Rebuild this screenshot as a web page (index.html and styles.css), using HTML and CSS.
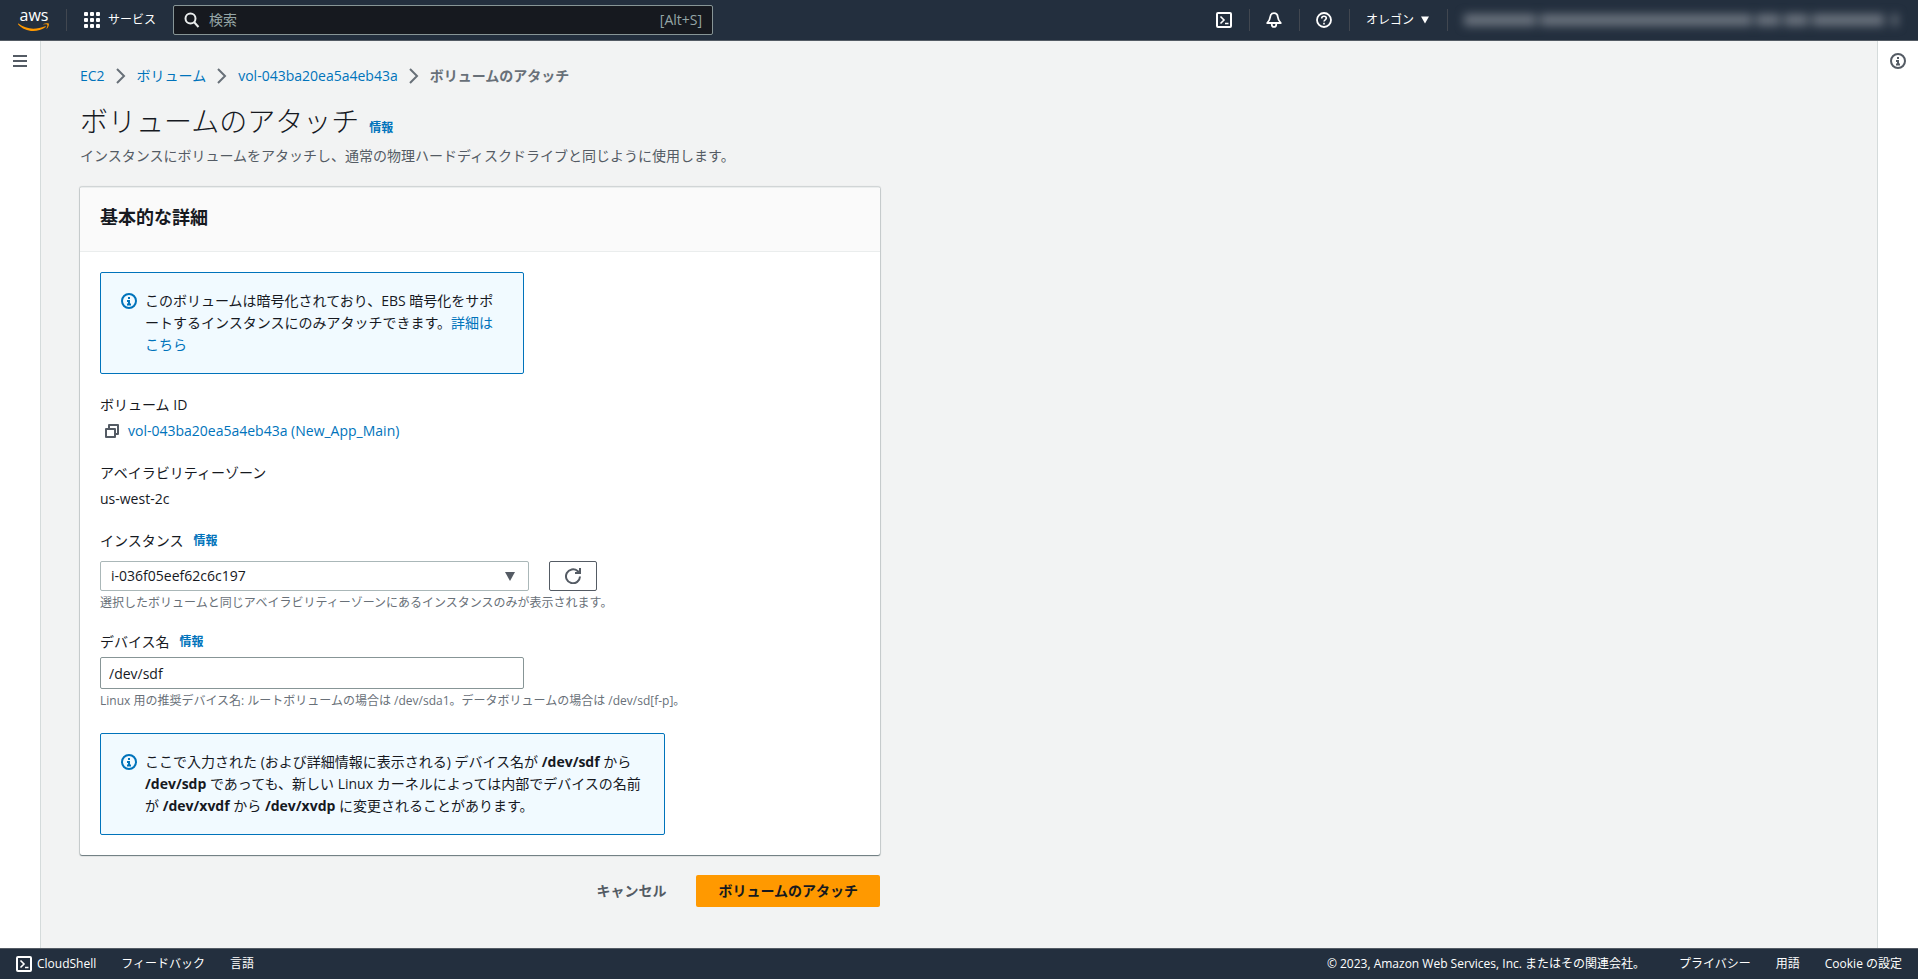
FILE: index.html
```
<!DOCTYPE html>
<html lang="ja">

<head>
	<meta charset="UTF-8">
	<meta name="viewport" content="width=device-width, initial-scale=1.0">
	<title>ボリュームのアタッチ | EC2</title>
	<link rel="stylesheet" href="styles.css">
</head>

<body>
	<header class="topbar">
		<a href="#" class="logo" aria-label="aws">
			<span class="logo-text">aws</span>
			<svg class="logo-smile" width="32" height="10" viewBox="0 0 32 10" fill="#ff9900">
				<path d="M.4 1.6C4.8 5 10 6.7 15.300 6.700c4 0 8-.9 11.800-2.500.7-.3 1.200.4.6.9C24.200 7.600 19.400 9 15.200 9 9.300 9 4.100 6.700.200 2.500c-.4-.5-.2-1.100.2-.9z"/>
				<path d="M29.300 2.800c-.6-.7-2.800-.4-3.800-.2-.3 0-.4-.3-.1-.5 1.900-1.300 5-.9 5.400-.5.400.5-.1 3.600-1.900 5.100-.3.200-.5.100-.4-.2.400-1 1.300-3.100.8-3.700z"/>
			</svg>
		</a>
		<span class="divider"></span>
		<button type="button" class="services">
			<svg width="18" height="18" viewBox="0 0 18 18" fill="#fff">
				<rect x="1" y="1" width="4" height="4" rx="1"/><rect x="7" y="1" width="4" height="4" rx="1"/><rect x="13" y="1" width="4" height="4" rx="1"/>
				<rect x="1" y="7" width="4" height="4" rx="1"/><rect x="7" y="7" width="4" height="4" rx="1"/><rect x="13" y="7" width="4" height="4" rx="1"/>
				<rect x="1" y="13" width="4" height="4" rx="1"/><rect x="7" y="13" width="4" height="4" rx="1"/><rect x="13" y="13" width="4" height="4" rx="1"/>
			</svg>
			サービス
		</button>
		<form class="search">
			<svg width="16" height="16" viewBox="0 0 16 16" fill="none" stroke="#eaeded" stroke-width="2">
				<circle cx="6.500" cy="6.500" r="5"/>
				<path d="M10 10l4.500 5"/>
			</svg>
			<input type="text" aria-label="検索" placeholder="検索">
			<span class="shortcut">[Alt+S]</span>
		</form>
		<div class="topbar-right">
			<button type="button" class="icon-btn" aria-label="CloudShell">
				<svg width="16" height="16" viewBox="0 0 16 16" fill="none" stroke="#fff" stroke-width="2">
					<rect x="1" y="1" width="14" height="14" rx="1"/>
					<path d="M4.500 4.500L8 8l-3.500 3.500M9 11.500h3.500" stroke-width="1.600"/>
				</svg>
			</button>
			<span class="divider"></span>
			<button type="button" class="icon-btn" aria-label="通知">
				<svg width="16" height="16" viewBox="0 0 16 16" fill="none" stroke="#fff" stroke-width="1.800" stroke-linejoin="round">
					<path d="M8 1.200C5.800 1.200 4.400 2.800 4.200 5 4 7.500 3.300 8.700 1.200 11h13.600c-2.100-2.300-2.800-3.500-3-6C11.600 2.800 10.200 1.200 8 1.200z"/>
					<path d="M5.800 11.500v1.200a2.200 2.200 0 0 0 4.400 0v-1.200"/>
				</svg>
			</button>
			<span class="divider"></span>
			<button type="button" class="icon-btn" aria-label="ヘルプ">
				<svg width="16" height="16" viewBox="0 0 16 16" fill="none" stroke="#fff" stroke-width="1.800">
					<circle cx="8" cy="8" r="7"/>
					<path d="M5.700 6.500C5.700 5 6.700 4.300 8 4.300s2.300.8 2.300 2c0 1.500-2.300 1.500-2.300 3.200M8 10.700v1.800" stroke-width="1.600"/>
				</svg>
			</button>
			<span class="divider"></span>
			<button type="button" class="region">
				オレゴン
				<svg width="8" height="8" viewBox="0 0 8 8" fill="#fff"><path d="M0 .5h8L4 7.500z"/></svg>
			</button>
			<span class="divider"></span>
			<div class="account">
				<span class="account-part part-l"></span>
				<span class="account-part part-xl"></span>
				<span class="account-part part-m"></span>
				<span class="account-part part-m"></span>
				<span class="account-part part-l"></span>
				<span class="account-part part-s"></span>
			</div>
		</div>
	</header>

	<div class="layout">
		<nav class="rail rail-left">
			<button type="button" class="icon-btn" aria-label="メニュー">
				<svg width="16" height="16" viewBox="0 0 16 16" stroke="#545b64" stroke-width="2">
					<path d="M1 3h14M1 8h14M1 13h14"/>
				</svg>
			</button>
		</nav>

		<main class="content">
			<nav class="breadcrumb">
				<a href="#">EC2</a>
				<svg width="10" height="16" viewBox="0 0 10 16" fill="none" stroke="#687078" stroke-width="2"><path d="M1 1l7 7-7 7"/></svg>
				<a href="#">ボリューム</a>
				<svg width="10" height="16" viewBox="0 0 10 16" fill="none" stroke="#687078" stroke-width="2"><path d="M1 1l7 7-7 7"/></svg>
				<a href="#">vol-043ba20ea5a4eb43a</a>
				<svg width="10" height="16" viewBox="0 0 10 16" fill="none" stroke="#687078" stroke-width="2"><path d="M1 1l7 7-7 7"/></svg>
				<span class="current">ボリュームのアタッチ</span>
			</nav>

			<div class="page-title">
				<h1>ボリュームのアタッチ</h1>
				<a href="#" class="info">情報</a>
			</div>
			<p class="description">インスタンスにボリュームをアタッチし、通常の物理ハードディスクドライブと同じように使用します。</p>

			<form class="attach-form">
				<section class="card">
					<div class="card-header">
						<h2>基本的な詳細</h2>
					</div>
					<div class="card-body">
						<div class="alert">
							<svg width="16" height="16" viewBox="0 0 16 16" fill="none" stroke="#0073bb" stroke-width="2">
								<circle cx="8" cy="8" r="7"/>
								<path d="M8 4v2M6 8h2v3M6 11.500h4"/>
							</svg>
							<p>このボリュームは暗号化されており、EBS 暗号化をサポートするインスタンスにのみアタッチできます。<a href="#">詳細はこちら</a></p>
						</div>

						<div class="field">
							<div class="label">ボリューム ID</div>
							<div class="value copy-row">
								<button type="button" class="copy-btn" aria-label="コピー">
									<svg width="16" height="16" viewBox="0 0 16 16" fill="none" stroke="#545b64" stroke-width="2" stroke-linejoin="round">
										<rect x="2" y="6" width="9" height="8"/>
										<path d="M5 6V2h9v9h-3"/>
									</svg>
								</button>
								<a href="#">vol-043ba20ea5a4eb43a (New_App_Main)</a>
							</div>
						</div>

						<div class="field">
							<div class="label">アベイラビリティーゾーン</div>
							<div class="value">us-west-2c</div>
						</div>

						<div class="field">
							<div class="label">
								<label for="instance">インスタンス</label>
								<a href="#" class="info">情報</a>
							</div>
							<div class="select-row">
								<div class="select-wrap">
									<select id="instance">
										<option>i-036f05eef62c6c197</option>
									</select>
									<svg class="caret" width="10" height="9" viewBox="0 0 10 9" fill="#545b64"><path d="M0 0h10L5 9z"/></svg>
								</div>
								<button type="button" class="refresh-btn" aria-label="更新">
									<svg width="16" height="16" viewBox="0 0 16 16" fill="none" stroke="#545b64" stroke-width="2">
										<path d="M15 8.500A7 7 0 1 1 12.600 3L14 4.500"/>
										<path d="M15 0v5H10"/>
									</svg>
								</button>
							</div>
							<div class="hint">選択したボリュームと同じアベイラビリティーゾーンにあるインスタンスのみが表示されます。</div>
						</div>

						<div class="field">
							<div class="label">
								<label for="device">デバイス名</label>
								<a href="#" class="info">情報</a>
							</div>
							<input type="text" id="device" class="text-input" value="/dev/sdf">
							<div class="hint">Linux 用の推奨デバイス名: ルートボリュームの場合は /dev/sda1。データボリュームの場合は /dev/sd[f-p]。</div>
						</div>

						<div class="alert alert-wide">
							<svg width="16" height="16" viewBox="0 0 16 16" fill="none" stroke="#0073bb" stroke-width="2">
								<circle cx="8" cy="8" r="7"/>
								<path d="M8 4v2M6 8h2v3M6 11.500h4"/>
							</svg>
							<p>ここで入力された (および詳細情報に表示される) デバイス名が <b>/dev/sdf</b> から <b>/dev/sdp</b> であっても、新しい Linux カーネルによっては内部でデバイスの名前が <b>/dev/xvdf</b> から <b>/dev/xvdp</b> に変更されることがあります。</p>
						</div>
					</div>
				</section>

				<div class="actions">
					<button type="button" class="btn btn-link">キャンセル</button>
					<button type="submit" class="btn btn-primary">ボリュームのアタッチ</button>
				</div>
			</form>
		</main>

		<aside class="rail rail-right">
			<button type="button" class="icon-btn" aria-label="情報パネル">
				<svg width="16" height="16" viewBox="0 0 16 16" fill="none" stroke="#545b64" stroke-width="2">
					<circle cx="8" cy="8" r="7"/>
					<path d="M8 4v2M6 8h2v3M6 11.500h4"/>
				</svg>
			</button>
		</aside>
	</div>

	<footer class="footer">
		<button type="button" class="cloudshell">
			<svg width="16" height="16" viewBox="0 0 16 16" fill="none" stroke="#fff" stroke-width="2">
				<rect x="1" y="1" width="14" height="14" rx="1"/>
				<path d="M4.500 4.500L8 8l-3.500 3.500M9 11.500h3.500" stroke-width="1.600"/>
			</svg>
			CloudShell
		</button>
		<a href="#">フィードバック</a>
		<a href="#">言語</a>
		<span class="copyright">© 2023, Amazon Web Services, Inc. またはその関連会社。</span>
		<a href="#">プライバシー</a>
		<a href="#">用語</a>
		<a href="#">Cookie の設定</a>
	</footer>
</body>

</html>
```
FILE: styles.css
```
* {
	box-sizing: border-box;
}

body {
	margin: 0;
	min-height: 100vh;
	display: flex;
	flex-direction: column;
	font-family: "Open Sans", "Noto Sans CJK JP", sans-serif;
	font-size: 14px;
	line-height: 22px;
	color: #16191f;
	background: #f2f3f3;
}

h1, h2, p {
	margin: 0;
}

a {
	color: #0073bb;
	text-decoration: none;
}

button, input, select {
	font-family: inherit;
	font-size: inherit;
	line-height: inherit;
	color: inherit;
}

button {
	padding: 0;
	border: none;
	background: none;
	cursor: pointer;
}

svg {
	display: block;
	flex-shrink: 0;
}

/* top bar */
.topbar {
	display: flex;
	align-items: center;
	height: 41px;
	padding-left: 18px;
	background: #232f3e;
	border-bottom: 1px solid #545b64;
	color: #fff;
	font-size: 12px;
}

.logo {
	display: flex;
	flex-direction: column;
	align-items: center;
	width: 32px;
	margin-right: 16px;
	color: #fff;
}

.logo-text {
	font-size: 16px;
	font-weight: 500;
	line-height: 12px;
}

.logo-smile {
	margin-top: 1px;
}

.divider {
	width: 1px;
	height: 22px;
	background: #414750;
}

.services {
	display: flex;
	align-items: center;
	gap: 7px;
	margin: 0 17px 0 16px;
}

.search {
	display: flex;
	align-items: center;
	gap: 9px;
	width: 540px;
	height: 30px;
	padding: 0 10px;
	background: #16191f;
	border: 1px solid #879596;
	border-radius: 2px;
	font-size: 14px;
}

.search input {
	flex: 1;
	min-width: 0;
	padding: 0;
	border: none;
	outline: none;
	background: none;
	color: #fff;
}

.search input::placeholder,
.shortcut {
	color: #95a5a6;
}

.topbar-right {
	display: flex;
	align-items: center;
	gap: 16px;
	margin-left: auto;
	padding-right: 20px;
}

.icon-btn {
	width: 17px;
}

.region {
	display: flex;
	align-items: center;
	gap: 7px;
	padding-right: 2px;
}

.account {
	display: flex;
	align-items: center;
	gap: 4px;
	width: 434px;
	height: 18px;
	filter: blur(5px);
}

.account-part {
	height: 12px;
	background: #6a727d;
}

.part-s {
	width: 6px;
	margin-left: auto;
}

.part-m {
	width: 24px;
}

.part-l {
	width: 72px;
}

.part-xl {
	width: 212px;
}

/* page */
.layout {
	flex: 1;
	display: flex;
}

.rail {
	display: flex;
	justify-content: center;
	align-items: flex-start;
	width: 41px;
	padding-top: 12px;
	background: #fff;
}

.rail-left {
	border-right: 1px solid #d5dbdb;
}

.rail-right {
	border-left: 1px solid #d5dbdb;
}

.content {
	flex: 1;
	padding: 24px 40px 32px 39px;
}

.breadcrumb {
	display: flex;
	align-items: center;
	gap: 11px;
}

.current {
	color: #687078;
	font-weight: 700;
}

.page-title {
	display: flex;
	align-items: baseline;
	gap: 10px;
	margin-top: 14px;
}

.page-title h1 {
	font-size: 28px;
	font-weight: 300;
	line-height: 40px;
}

.info {
	font-size: 12px;
	font-weight: 700;
}

.description {
	margin-top: 4px;
	color: #545b64;
}

.attach-form {
	max-width: 800px;
	margin-top: 20px;
}

.card {
	background: #fff;
	border-top: 1px solid #eaeded;
	border-radius: 2px;
	box-shadow: 0 1px 1px 0 rgba(0, 28, 36, 0.5), 0 0 1px 1px rgba(0, 28, 36, 0.15);
}

.card-header {
	padding: 18px 20px 23px;
	background: #fafafa;
	border-bottom: 1px solid #eaeded;
}

.card-header h2 {
	font-size: 18px;
	font-weight: 700;
	line-height: 22px;
}

.card-body {
	display: flex;
	flex-direction: column;
	gap: 20px;
	padding: 20px;
}

.alert {
	display: flex;
	gap: 8px;
	max-width: 424px;
	padding: 17px 20px;
	background: #f1faff;
	border: 1px solid #0073bb;
	border-radius: 2px;
}

.alert svg {
	margin-top: 3px;
}

.alert-wide {
	max-width: 565px;
	margin-top: 4px;
}

.label {
	display: flex;
	align-items: center;
	gap: 10px;
}

.field .value {
	margin-top: 4px;
}

.copy-row {
	display: flex;
	align-items: center;
	gap: 8px;
	padding-left: 4px;
}

.select-row {
	display: flex;
	gap: 20px;
	margin-top: 9px;
}

.select-wrap {
	position: relative;
	width: 429px;
}

.select-wrap select {
	appearance: none;
	display: block;
	width: 100%;
	height: 30px;
	padding: 0 30px 0 10px;
	border: 1px solid #aab7b8;
	border-radius: 2px;
	background: #fff;
}

.caret {
	position: absolute;
	top: 11px;
	right: 14px;
	pointer-events: none;
}

.refresh-btn {
	display: flex;
	justify-content: center;
	align-items: center;
	width: 48px;
	height: 30px;
	border: 1px solid #545b64;
	border-radius: 2px;
}

.text-input {
	display: block;
	width: 100%;
	max-width: 424px;
	height: 32px;
	margin-top: 4px;
	padding: 0 8px;
	border: 1px solid #879596;
	border-radius: 2px;
	background: #fff;
}

.hint {
	margin-top: 4px;
	font-size: 12px;
	line-height: 16px;
	color: #687078;
}

.actions {
	display: flex;
	justify-content: flex-end;
	gap: 10px;
	margin-top: 20px;
}

.btn {
	height: 32px;
	padding: 0 20px;
	border-radius: 2px;
	font-weight: 700;
}

.btn-link {
	color: #545b64;
}

.btn-primary {
	padding: 0 22px;
	background: #ff9900;
	color: #16191f;
}

/* footer */
.footer {
	display: flex;
	align-items: center;
	gap: 25px;
	height: 31px;
	padding: 0 16px;
	background: #232f3e;
	border-top: 1px solid #545b64;
	color: #fff;
	font-size: 12px;
}

.footer a {
	color: #fff;
}

.cloudshell {
	display: flex;
	align-items: center;
	gap: 5px;
	font-weight: 500;
}

.copyright {
	margin-left: auto;
	margin-right: 9px;
}
```
